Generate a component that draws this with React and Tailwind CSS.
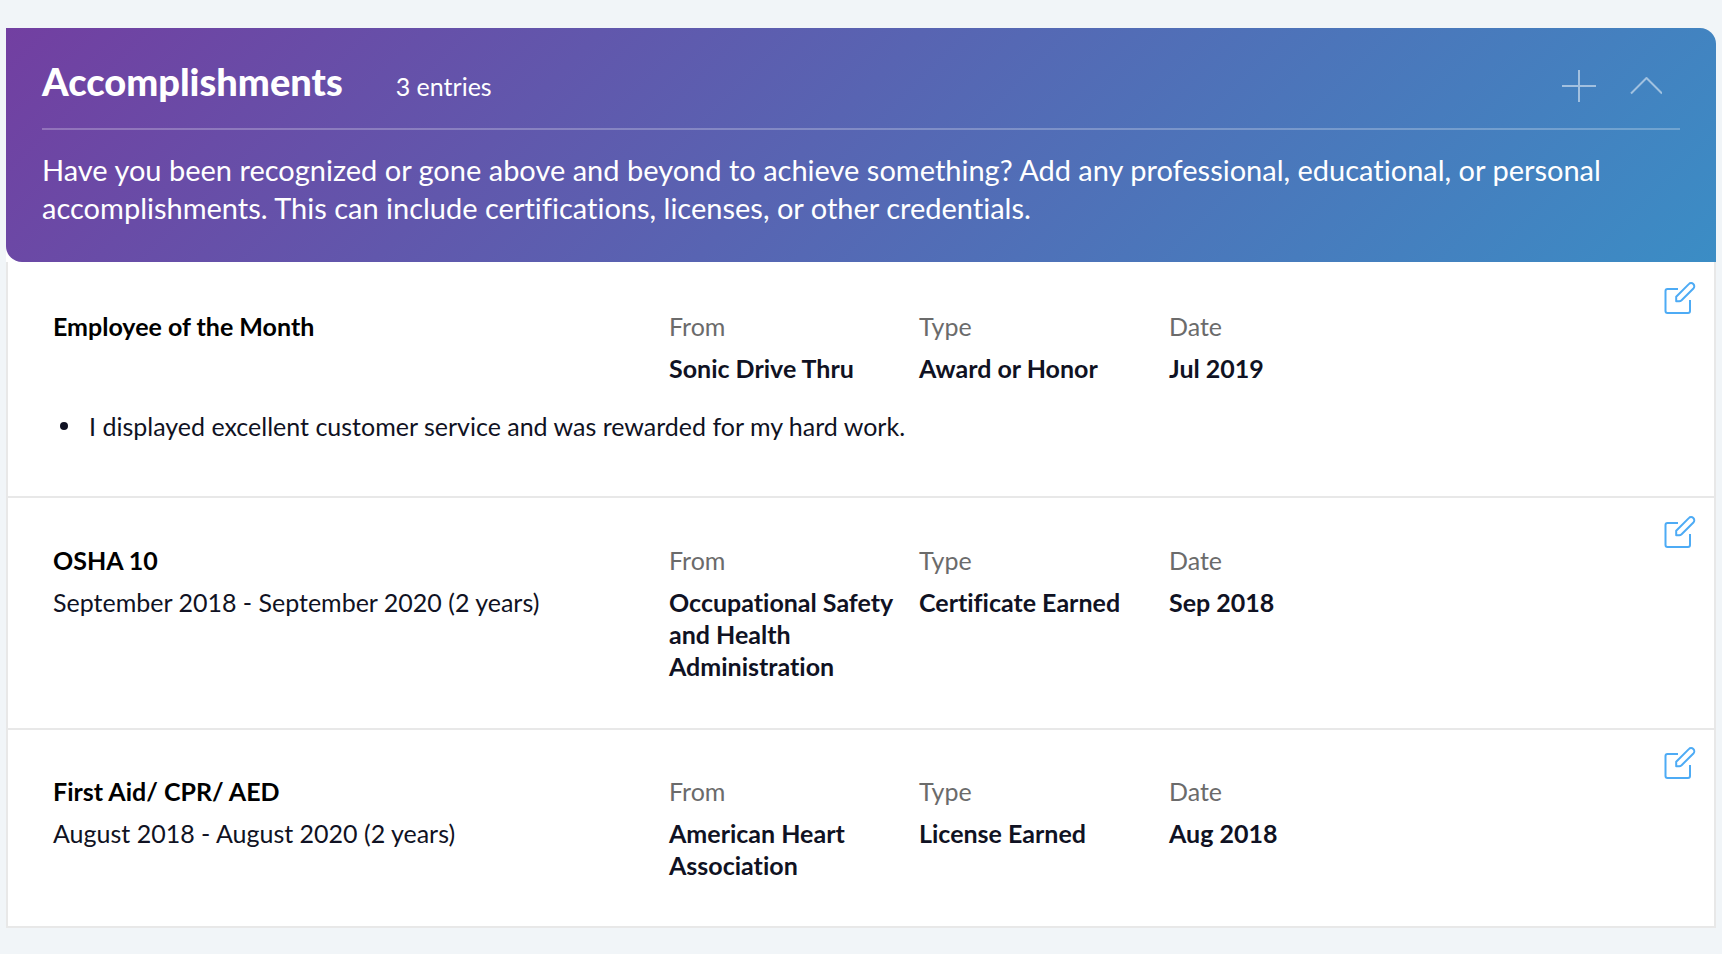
const entries = [
  {
    title: 'Employee of the Month',
    from: 'Sonic Drive Thru',
    type: 'Award or Honor',
    date: 'Jul 2019',
    notes: ['I displayed excellent customer service and was rewarded for my hard work.'],
  },
  {
    title: 'OSHA 10',
    period: 'September 2018 - September 2020 (2 years)',
    from: 'Occupational Safety and Health Administration',
    type: 'Certificate Earned',
    date: 'Sep 2018',
  },
  {
    title: 'First Aid/ CPR/ AED',
    period: 'August 2018 - August 2020 (2 years)',
    from: 'American Heart Association',
    type: 'License Earned',
    date: 'Aug 2018',
  },
];

function PlusIcon() {
  return (
    <svg width="34" height="32" viewBox="0 0 34 32" fill="none" stroke="currentColor" strokeWidth="2" aria-hidden="true">
      <path d="M0 16H34M17 0V15M17 17V32" />
    </svg>
  );
}

function ChevronUpIcon() {
  return (
    <svg width="32" height="32" viewBox="0 0 32 32" fill="none" stroke="currentColor" strokeWidth="2" strokeLinejoin="round" aria-hidden="true">
      <path d="M1 23.500L16.500 8L32 23.500" />
    </svg>
  );
}

function EditIcon() {
  return (
    <svg width="32" height="32" viewBox="0 0 32 32" fill="none" stroke="currentColor" strokeWidth="2" strokeLinejoin="round" aria-hidden="true">
      <path d="M14 7H3.500A2 2 0 0 0 1.500 9V29A2 2 0 0 0 3.500 31H24A2 2 0 0 0 26 29V18" />
      <path d="M12.200 19.200V14.700L24.800 2.100A3.100 3.100 0 0 1 29.400 6.500L17.600 18.200Q16.500 19.200 15.200 19.200Z" />
    </svg>
  );
}

function Field({ label, value }) {
  return (
    <dl>
      <dt className="text-[#6b6b6b]">{label}</dt>
      <dd className="mt-2.5 pr-2 font-bold">{value}</dd>
    </dl>
  );
}

function Entry({ entry }) {
  return (
    <li className="flex items-start border-b-2 border-[#e8e8e8] py-[46px] pl-[45px] text-[25px] leading-8 text-[#101223] last:py-[45px]">
      <div className="min-w-0 flex-1">
        <div className="grid grid-cols-[616fr_250fr_250fr_495fr]">
          <div>
            <h3 className="font-bold text-black">{entry.title}</h3>
            {entry.period && <p className="mt-2.5">{entry.period}</p>}
          </div>
          <Field label="From" value={entry.from} />
          <Field label="Type" value={entry.type} />
          <Field label="Date" value={entry.date} />
        </div>
        {entry.notes && (
          <ul className="mt-[26px] mb-2 pl-[7px]">
            {entry.notes.map((note) => (
              <li key={note} className="flex items-center gap-[21px]">
                <span className="size-2 shrink-0 rounded-full bg-[#101223]" />
                {note}
              </li>
            ))}
          </ul>
        )}
      </div>
      <button type="button" aria-label={`Edit ${entry.title}`} className="-mt-7 mr-[18px] text-[#4dabf5]">
        <EditIcon />
      </button>
    </li>
  );
}

export default function App() {
  return (
    <main className="min-h-screen bg-[#f1f5f8] px-1.5 pt-7 pb-6 font-['Lato',sans-serif] [font-variant-ligatures:none]">
      <section className="bg-[linear-gradient(to_bottom,#f1f5f8_28px,#ffffff_28px)]">
        <header className="rounded-tr-2xl rounded-bl-2xl bg-[linear-gradient(135deg,#723fa1,#3b8dc5)] px-9 pt-7 pb-[35px] text-white">
          <div className="flex items-center justify-between border-b-2 border-white/25 pb-[22px]">
            <div className="flex items-baseline gap-[53px]">
              <h2 className="text-[38px] leading-[50px] font-black">Accomplishments</h2>
              <p className="text-[25px] leading-8">3 entries</p>
            </div>
            <div className="flex gap-[34px] pt-2.5 pr-[18px] text-white/50">
              <button type="button" aria-label="Add accomplishment"><PlusIcon /></button>
              <button type="button" aria-label="Collapse section"><ChevronUpIcon /></button>
            </div>
          </div>
          <p className="mt-[21px] text-[29px] leading-[38px]">
            Have you been recognized or gone above and beyond to achieve something? Add any professional, educational, or personal accomplishments. This can include certifications, licenses, or other credentials.
          </p>
        </header>
        <ul className="border-x-2 border-[#e8e8e8] pt-0.5">
          {entries.map((entry) => (
            <Entry key={entry.title} entry={entry} />
          ))}
        </ul>
      </section>
    </main>
  );
}
